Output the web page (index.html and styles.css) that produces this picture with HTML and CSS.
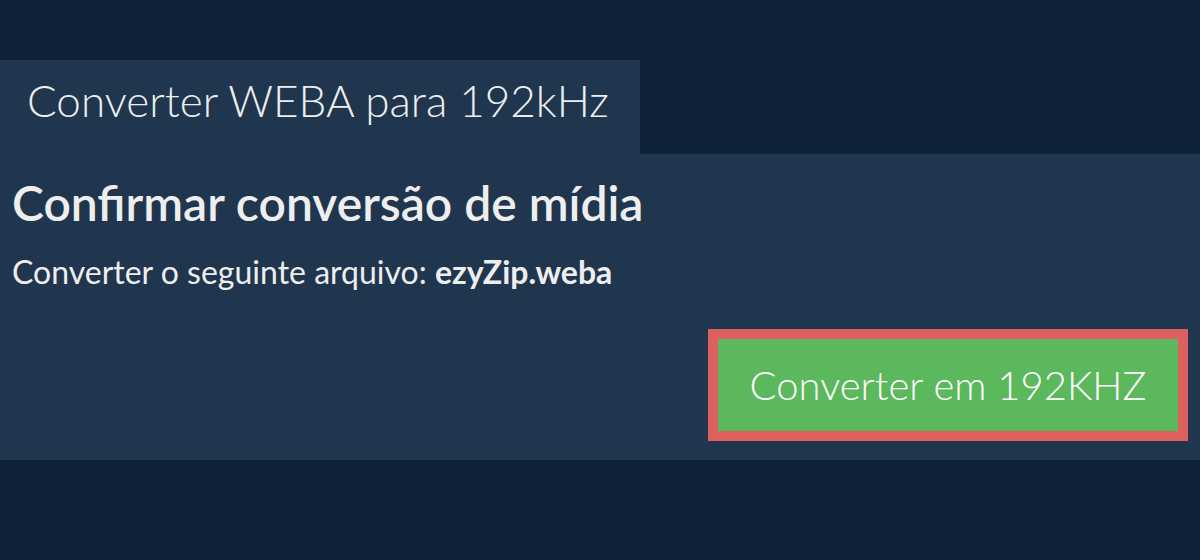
FILE: index.html
```html
<!DOCTYPE html>
<html lang="pt">
<head>
  <meta charset="UTF-8">
  <meta name="viewport" content="width=device-width, initial-scale=1.0">
  <title>Converter WEBA para 192kHz</title>
  <link rel="stylesheet" href="styles.css">
</head>
<body>
  <div class="tab">Converter WEBA para 192kHz</div>
  <div class="panel">
    <h1>Confirmar conversão de mídia</h1>
    <p class="file">Converter o seguinte arquivo: <strong>ezyZip.weba</strong></p>
    <div class="actions">
      <button class="convert">Converter em 192KHZ</button>
    </div>
  </div>
</body>
</html>
```

FILE: styles.css
```css
body {
  font-family: 'Lato', sans-serif;
  background-color: #0f2239;
  margin: 0;
  padding: 60px 0 0;
  color: #eeeeee;
}
.tab {
  display: inline-block;
  width: 640px;
  height: 94px;
  box-sizing: border-box;
  padding: 12px 0 0 27px;
  background-color: #20364f;
  font-size: 44px;
  font-weight: 300;
  line-height: 56px;
  vertical-align: top;
}
.panel {
  background-color: #20364f;
  height: 306px;
  box-sizing: border-box;
  padding: 20px 12px 0;
}
.panel h1 {
  font-size: 48px;
  font-weight: 600;
  margin: 0;
  line-height: 58px;
}
.file {
  font-size: 32px;
  line-height: 40px;
  margin: 20px 0 0;
}
.file strong {
  font-weight: 700;
}
.actions {
  display: flex;
  justify-content: flex-end;
  margin-top: 37px;
}
.convert {
  font-family: 'Lato', sans-serif;
  font-size: 40px;
  font-weight: 300;
  color: #ffffff;
  background-color: #5cb85c;
  border: 10px solid #dc605e;
  width: 480px;
  height: 112px;
  cursor: pointer;
}
```
